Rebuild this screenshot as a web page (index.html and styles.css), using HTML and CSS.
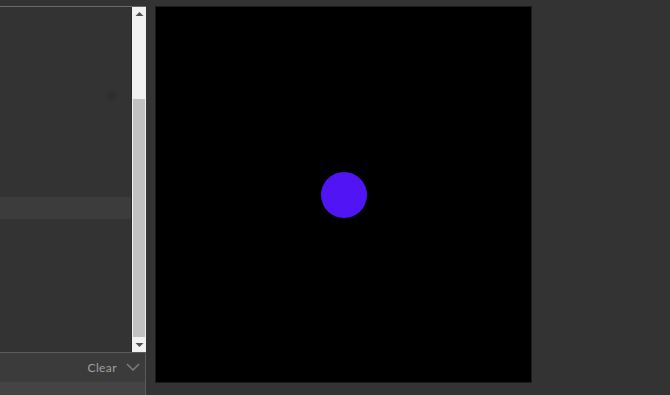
FILE: index.html
```html
<!DOCTYPE html>
<html>
<head>
<meta charset="utf-8">
<link rel="stylesheet" href="styles.css">
</head>
<body>
<div class="app">
  <div class="sidebar">
    <div class="list">
      <div class="items">
        <div class="spacer"></div>
        <div class="row-hl"></div>
        <div class="ghost"></div>
      </div>
      <div class="scrollbar">
        <div class="arrow">
          <svg width="9" height="6" viewBox="0 0 9 6"><polygon points="0.5,5 4.5,1 8.5,5" fill="#505050"/></svg>
        </div>
        <div class="track">
          <div class="thumb-gap"></div>
          <div class="thumb"></div>
        </div>
        <div class="arrow">
          <svg width="9" height="6" viewBox="0 0 9 6"><polygon points="0.5,1 4.5,5 8.5,1" fill="#505050"/></svg>
        </div>
      </div>
    </div>
    <div class="footer">
      <span class="clear">Clear</span>
      <svg class="chev" width="14" height="8" viewBox="0 0 14 8"><polyline points="1,1 7,7 13,1" fill="none" stroke="#7e7e7e" stroke-width="1.5"/></svg>
    </div>
    <div class="strip"></div>
  </div>
  <div class="stage">
    <div class="canvas">
      <div class="dot"></div>
    </div>
  </div>
</div>
</body>
</html>
```

FILE: styles.css
```css
html, body {
  margin: 0;
  padding: 0;
  background: #333333;
  width: 670px;
  height: 395px;
  overflow: hidden;
  font-family: "Lato", "Open Sans", sans-serif;
}
.app {
  display: flex;
  height: 395px;
}
.sidebar {
  width: 146px;
  display: flex;
  flex-direction: column;
  padding-top: 6px;
  box-sizing: border-box;
}
.list {
  height: 346px;
  border-top: 1px solid #6a6a6a;
  box-sizing: border-box;
  display: flex;
}
.items {
  flex: 1;
  display: flex;
  flex-direction: column;
  position: relative;
  background: #333333;
}
.spacer {
  height: 190px;
}
.row-hl {
  height: 22px;
  background: #3c3c3c;
}
.ghost {
  position: absolute;
  left: 107px;
  top: 84px;
  width: 10px;
  height: 10px;
  border-radius: 50%;
  background: #2f2f2f;
}
.scrollbar {
  width: 15px;
  background: #f1f1f1;
  display: flex;
  flex-direction: column;
  border-left: 1px solid #2a2a2a;
  box-sizing: border-box;
}
.arrow {
  height: 14px;
  display: flex;
  align-items: center;
  justify-content: center;
}
.track {
  flex: 1;
  display: flex;
  flex-direction: column;
  padding: 0 1px 1px 1px;
}
.thumb-gap {
  height: 78px;
}
.thumb {
  flex: 1;
  background: #c1c1c1;
}
.footer {
  height: 30px;
  border-top: 1px solid #5c5c5c;
  border-right: 1px solid #5c5c5c;
  background: #3b3b3b;
  box-sizing: border-box;
  display: flex;
  align-items: center;
  justify-content: flex-end;
  padding-right: 5px;
  gap: 9px;
}
.clear {
  color: #9da1a6;
  font-size: 12px;
  letter-spacing: 0.4px;
  padding-bottom: 1px;
}
.chev {
  display: block;
  margin-bottom: 2px;
}
.strip {
  flex: 1;
  background: #444444;
  border-right: 1px solid #5c5c5c;
}
.stage {
  padding: 6px 0 0 9px;
}
.canvas {
  width: 377px;
  height: 377px;
  background: #000000;
  border: 1px solid #1c1c1c;
  box-sizing: border-box;
  display: flex;
  align-items: center;
  justify-content: center;
}
.dot {
  width: 46px;
  height: 46px;
  border-radius: 50%;
  background: #5014f5;
}
```
